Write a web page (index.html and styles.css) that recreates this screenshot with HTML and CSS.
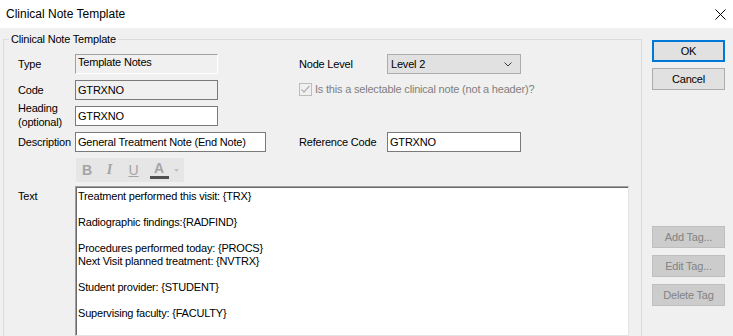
FILE: index.html
```html
<!DOCTYPE html>
<html lang="en">
<head>
    <meta charset="UTF-8">
    <meta name="viewport" content="width=device-width, initial-scale=1.0">
    <title>Clinical Note Template</title>
    <link rel="stylesheet" href="styles.css">
</head>
<body>
    <div class="title-bar">
        <span class="title">Clinical Note Template</span>
        <svg class="close-icon" width="11" height="11" viewBox="0 0 11 11">
            <path d="M0.5 0.5 L10.5 10.5 M10.5 0.5 L0.5 10.5" stroke="#000" stroke-width="1" fill="none"/>
        </svg>
    </div>

    <div class="dialog">
        <fieldset class="group-box">
            <legend>Clinical Note Template</legend>

            <div class="form-grid">
                <label class="field-label type-label">Type</label>
                <div class="input input-short input-static type-field">Template Notes</div>

                <label class="field-label node-label">Node Level</label>
                <div class="select node-field">
                    <span>Level 2</span>
                    <svg width="8" height="5" viewBox="0 0 8 5">
                        <path d="M0.5 0.5 L4 4 L7.5 0.5" stroke="#3c3c3c" stroke-width="1" fill="none"/>
                    </svg>
                </div>

                <label class="field-label code-label">Code</label>
                <div class="input input-short input-disabled code-field">GTRXNO</div>

                <div class="check-row">
                    <span class="check-box">
                        <svg width="11" height="11" viewBox="0 0 11 11">
                            <path d="M1.5 5.5 L4 8 L9.5 2" stroke="#b4b4b4" stroke-width="1.3" fill="none"/>
                        </svg>
                    </span>
                    <span class="check-text">Is this a selectable clinical note (not a header)?</span>
                </div>

                <label class="field-label heading-label">Heading<br>(optional)</label>
                <div class="input input-short heading-field">GTRXNO</div>

                <label class="field-label desc-label">Description</label>
                <div class="input input-wide desc-field">General Treatment Note (End Note)</div>

                <label class="field-label ref-label">Reference Code</label>
                <div class="input ref-field">GTRXNO</div>

                <div class="toolbar">
                    <span class="tool tool-bold">B</span>
                    <span class="tool tool-italic">I</span>
                    <span class="tool tool-underline">U</span>
                    <span class="tool tool-color">A</span>
                    <span class="tool tool-arrow">
                        <svg width="5" height="3" viewBox="0 0 5 3"><path d="M0 0 L5 0 L2.5 3 Z" fill="#c2c2c2"/></svg>
                    </span>
                </div>

                <label class="field-label text-label">Text</label>
                <div class="note-text">Treatment performed this visit: {TRX}

Radiographic findings:{RADFIND}

Procedures performed today: {PROCS}
Next Visit planned treatment: {NVTRX}

Student provider: {STUDENT}

Supervising faculty: {FACULTY}</div>
            </div>
        </fieldset>

        <div class="button-column">
            <button type="button" class="btn btn-default">OK</button>
            <button type="button" class="btn">Cancel</button>

            <div class="tag-buttons">
                <button type="button" class="btn btn-disabled">Add Tag...</button>
                <button type="button" class="btn btn-disabled">Edit Tag...</button>
                <button type="button" class="btn btn-disabled">Delete Tag</button>
            </div>
        </div>
    </div>
</body>
</html>
```

FILE: styles.css
```css
* {
    margin: 0;
    padding: 0;
    box-sizing: border-box;
}

body {
    width: 733px;
    height: 336px;
    overflow: hidden;
    background-color: #f0f0f0;
    font-family: "Liberation Sans", Arial, sans-serif;
    font-size: 11px;
    letter-spacing: -0.2px;
    color: #000;
}

.title-bar {
    height: 28px;
    background-color: #fff;
    display: flex;
    align-items: center;
    justify-content: space-between;
    padding: 0 7px 0 6px;
    font-size: 12px;
    letter-spacing: 0;
}

.close-icon {
    display: block;
}

.dialog {
    display: flex;
    align-items: flex-start;
    padding: 5px 0 0 3px;
}

/* groupbox runs off the bottom of the window, so no bottom edge */
.group-box {
    width: 639px;
    height: 303px;
    min-width: 0;
    border: 1px solid #dcdcdc;
    border-bottom: none;
    overflow: hidden;
}

.group-box legend {
    margin-left: 5px;
    padding: 0 2px;
    line-height: 13px;
}

.form-grid {
    display: grid;
    grid-template-columns: 57px 224px 88px 134px 1fr;
    grid-template-rows: 26px 26px 26px 26px 28px 150px;
    grid-template-areas:
        "type-l type-f node-l node-f ."
        "code-l code-f check check check"
        "head-l head-f . . ."
        "desc-l desc-f ref-l ref-f ."
        ". tools tools . ."
        "text-l text-f text-f text-f text-f";
    padding: 8px 12px 0 14px;
}

.field-label {
    line-height: 20px;
    white-space: nowrap;
}

.type-label { grid-area: type-l; }
.type-field { grid-area: type-f; }
.node-label { grid-area: node-l; }
.node-field { grid-area: node-f; }
.code-label { grid-area: code-l; }
.code-field { grid-area: code-f; }
.heading-field { grid-area: head-f; }
.desc-label { grid-area: desc-l; }
.desc-field { grid-area: desc-f; }
.ref-label { grid-area: ref-l; }
.ref-field { grid-area: ref-f; }

.heading-label {
    grid-area: head-l;
    line-height: 14px;
    margin-top: -5px;
}

.input {
    height: 20px;
    border: 1px solid #7a7a7a;
    background-color: #fff;
    padding: 0 2px;
    line-height: 18px;
    white-space: nowrap;
}

.input-short {
    width: 143px;
}

.input-wide {
    width: 191px;
}

.input-disabled {
    background-color: #f0f0f0;
}

.input-static {
    background-color: #f0f0f0;
    border-color: #a0a0a0 #fff #fff #a0a0a0;
    padding-top: 1px;
    line-height: 13px;
}

.select {
    height: 20px;
    background-color: #e1e1e1;
    border: 1px solid #adadad;
    display: flex;
    align-items: center;
    justify-content: space-between;
    padding: 0 8px 0 3px;
}

.select svg {
    display: block;
}

.check-row {
    grid-area: check;
    display: flex;
    align-items: flex-start;
    gap: 3px;
    padding-top: 3px;
    white-space: nowrap;
}

.check-box {
    width: 13px;
    height: 13px;
    border: 1px solid #bcbcbc;
    background-color: #f0f0f0;
    display: flex;
    align-items: center;
    justify-content: center;
}

.check-box svg {
    display: block;
}

.check-text {
    line-height: 13px;
    color: #808080;
}

.toolbar {
    grid-area: tools;
    width: 108px;
    height: 24px;
    margin-left: 1px;
    background-color: #e6e6e6;
    display: flex;
    align-items: center;
}

.tool {
    display: flex;
    justify-content: center;
    color: #a4a4a4;
    font-size: 14px;
    font-weight: bold;
    letter-spacing: 0;
    line-height: 16px;
}

.tool-bold {
    width: 22px;
}

.tool-italic {
    width: 23px;
    font-family: "Liberation Serif", "Times New Roman", serif;
    font-style: italic;
}

.tool-underline {
    width: 25px;
    font-weight: normal;
    text-decoration: underline;
    text-underline-offset: 1px;
}

.tool-color {
    width: 26px;
    height: 20px;
    align-items: flex-start;
    position: relative;
}

.tool-color::after {
    content: "";
    position: absolute;
    left: 4px;
    right: 3px;
    top: 16px;
    height: 3px;
    background-color: #505050;
}

.tool-arrow {
    width: 9px;
}

.tool-arrow svg {
    display: block;
}

.text-label {
    grid-area: text-l;
    padding-top: 4px;
    line-height: 13px;
}

.note-text {
    grid-area: text-f;
    background-color: #fff;
    border: 1px solid;
    border-color: #a0a0a0 #e3e3e3 #e3e3e3 #a0a0a0;
    box-shadow: inset 1px 1px 0 #696969;
    padding: 3px 2px;
    line-height: 13px;
    white-space: pre-line;
}

.button-column {
    width: 73px;
    margin-left: 10px;
    padding-top: 7px;
    display: flex;
    flex-direction: column;
    gap: 6px;
}

.btn {
    display: block;
    width: 73px;
    height: 22px;
    border: 1px solid #adadad;
    background-color: #e1e1e1;
    font-family: inherit;
    font-size: 11px;
    letter-spacing: -0.2px;
    color: #000;
    line-height: 20px;
    text-align: center;
}

.btn-default {
    border: 2px solid #0078d7;
    line-height: 18px;
}

.tag-buttons {
    margin-top: 130px;
    display: flex;
    flex-direction: column;
    gap: 7px;
}

.btn-disabled {
    background-color: #cccccc;
    border-color: #bfbfbf;
    color: #838383;
}
```
